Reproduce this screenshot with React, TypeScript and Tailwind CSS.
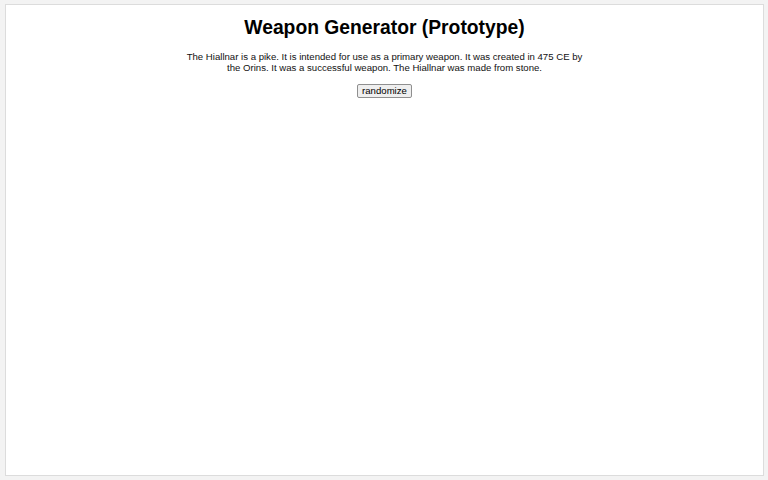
import { useState } from 'react'

const desc =
  'The Hiallnar is a pike. It is intended for use as a primary weapon. It was created in 475 CE by the Orins. It was a successful weapon. The Hiallnar was made from stone.'

export default function App() {
  const [text] = useState(desc)

  return (
    <div className="h-[480px] w-[768px] bg-[#f3f3f3] p-[4px_4px_4px_5px] font-['Liberation_Sans',sans-serif] text-black">
      <div className="flex h-full flex-col items-center border border-[#dcdcdc] bg-white">
        <h1 className="mt-[11px] text-[19.3px] font-bold leading-[23px]">Weapon Generator (Prototype)</h1>
        <p className="mt-[12px] max-w-[400px] text-center text-[9.6px] leading-[11px] text-[#111]">{text}</p>
        <button className="mt-[11px] h-[14px] rounded-[2px] border border-[#8f8f8f] bg-[#efefef] px-[4px] text-[9.6px] leading-[12px]">
          randomize
        </button>
      </div>
    </div>
  )
}
